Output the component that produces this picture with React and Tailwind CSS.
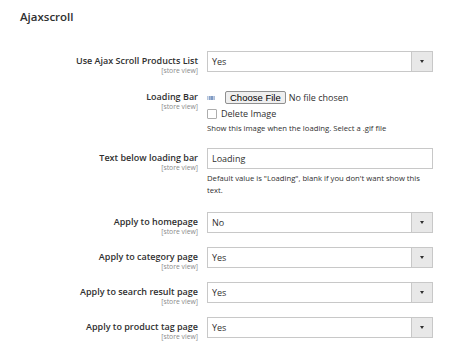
import React from "react";

const font = { fontFamily: '"Open Sans", "Liberation Sans", sans-serif' };

function Label({ text }) {
  return (
    <div className="w-[198px] shrink-0 text-right">
      <div className="whitespace-nowrap text-[9px] font-semibold leading-[12px] text-[#303030]">{text}</div>
      <div className="text-[6.8px] leading-[8px] text-[#8a8a8a]">[store view]</div>
    </div>
  );
}

function Select({ value }) {
  return (
    <div className="flex h-[21px] w-[226px] shrink-0 border border-[#c8c8c8] bg-white">
      <div className="flex flex-1 items-center pl-[4px] text-[9px] text-[#303030]">{value}</div>
      <div className="flex w-[21px] items-center justify-center border-l border-[#c8c8c8] bg-[#e8e8e8]">
        <div className="h-0 w-0 border-x-[2.5px] border-t-[3px] border-x-transparent border-t-[#303030]" />
      </div>
    </div>
  );
}

function SelectRow({ label, value, className }) {
  return (
    <div className={"flex h-[21px] items-start gap-[9px] " + className}>
      <div className="pt-[4px]">
        <Label text={label} />
      </div>
      <Select value={value} />
    </div>
  );
}

export default function App() {
  return (
    <div className="h-[347px] w-[474px] overflow-hidden bg-white" style={font}>
      <div className="h-[24px] pl-[20px] pt-[10px] text-[11.5px] font-semibold leading-[14px] text-[#303030]">Ajaxscroll</div>

      <SelectRow label="Use Ajax Scroll Products List" value="Yes" className="mt-[27px]" />

      <div className="mt-[19px] flex items-start gap-[9px]">
        <Label text="Loading Bar" />
        <div className="w-[226px]">
          <div className="flex h-[13px] items-center">
            <svg width="8" height="4" viewBox="0 0 8 4" className="mr-[10px]">
              <rect x="0" y="0" width="1.6" height="4" fill="#b7c6dc" />
              <rect x="2.1" y="0" width="1.6" height="4" fill="#7f9bc4" />
              <rect x="4.2" y="0" width="1.6" height="4" fill="#5f80b5" />
              <rect x="6.3" y="0" width="1.6" height="4" fill="#a3b6d3" />
            </svg>
            <button className="h-[13px] rounded-[2px] border border-[#8f8f8f] bg-[#efefef] px-[4px] text-[9.5px] leading-[11px] text-black" style={{ fontFamily: '"Liberation Sans", Arial, sans-serif' }}>Choose File</button>
            <span className="ml-[3px] text-[9px] text-[#303030]">No file chosen</span>
          </div>
          <div className="mt-[4px] flex h-[11px] items-center">
            <span className="h-[10px] w-[10px] rounded-[1px] border border-[#adadad] bg-white" />
            <span className="ml-[4px] text-[9px] text-[#303030]">Delete Image</span>
          </div>
          <div className="mt-[3px] whitespace-nowrap text-[7.7px] leading-[12px] text-[#303030]">Show this image when the loading. Select a .gif file</div>
        </div>
      </div>

      <div className="mt-[14px] flex items-start gap-[9px]">
        <div className="pt-[4px]">
          <Label text="Text below loading bar" />
        </div>
        <div className="w-[226px]">
          <div className="flex h-[21px] items-center border border-[#c8c8c8] pl-[4px] text-[9px] text-[#303030]">Loading</div>
          <div className="mt-[3px] text-[7.7px] leading-[12px] text-[#303030]">Default value is "Loading", blank if you don't want show this<br />text.</div>
        </div>
      </div>

      <SelectRow label="Apply to homepage" value="No" className="mt-[16px]" />
      <SelectRow label="Apply to category page" value="Yes" className="mt-[14px]" />
      <SelectRow label="Apply to search result page" value="Yes" className="mt-[14px]" />
      <SelectRow label="Apply to product tag page" value="Yes" className="mt-[14px]" />
    </div>
  );
}
